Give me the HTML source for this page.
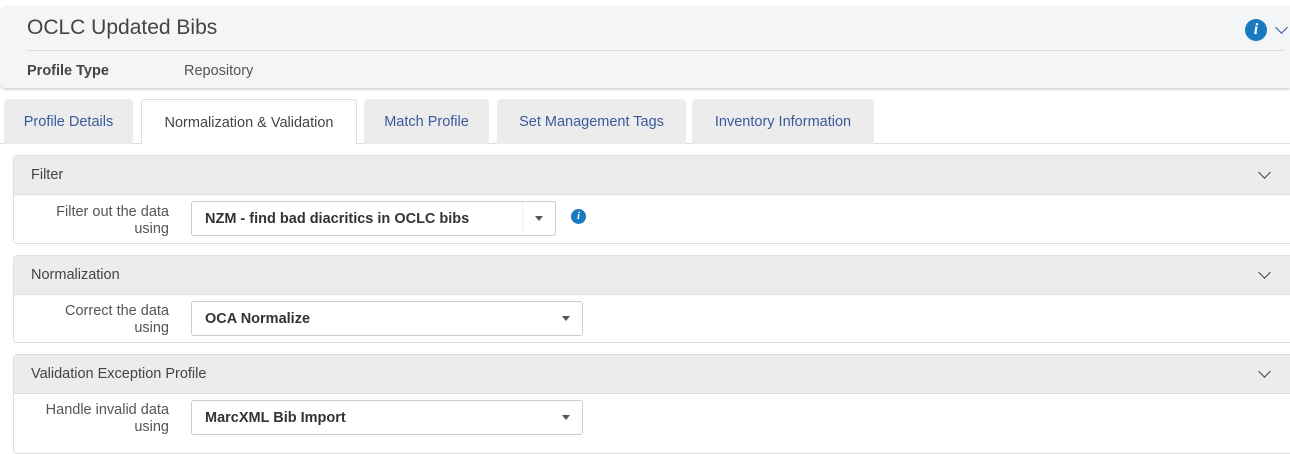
<!DOCTYPE html>
<html><head><style>
*{box-sizing:border-box;margin:0;padding:0}
body{width:1290px;height:440px;overflow:hidden;background:#fff;font-family:"Liberation Sans",sans-serif;color:#333;position:relative}
.abs{position:absolute}
.hdr{left:0;top:7px;width:1290px;height:81px;background:#f3f5f6;border-radius:6px 0 0 6px;box-shadow:0 1px 3px rgba(0,0,0,.25)}
.tab{position:absolute;top:99px;height:45px;background:#ececec;border-radius:4px 4px 0 0;color:#3a5a9c;font-size:14.5px;line-height:46px;text-align:center}
.sec{position:absolute;left:13px;width:1300px;border:1px solid #ddd;border-radius:4px}
.sh{position:relative;height:39px;background:#ececec;border-bottom:1px solid #ddd;padding-left:17px;line-height:39px;font-size:14.5px;color:#444}
.lbl{position:absolute;width:130px;left:25px;text-align:right;font-size:14.5px;color:#555;line-height:17px}
.sel{position:absolute;left:177px;height:35px;border:1px solid #ccc;border-radius:3px;font-weight:bold;font-size:14.5px;line-height:34px;padding-left:13px;color:#333}
.sel:after{content:"";position:absolute;right:12px;top:14px;border:4px solid transparent;border-top:5px solid #555}
.chev{position:absolute;right:43px;top:12px;width:9px;height:9px;border-right:1.6px solid #444;border-bottom:1.6px solid #444;transform:rotate(45deg)}
</style></head><body>
<div class="abs hdr">
 <div class="abs" style="left:27px;top:9px;font-size:21px;color:#444">OCLC Updated Bibs</div>
 <div class="abs" style="left:26px;top:43px;width:1258px;height:1px;background:#dcdcdc"></div>
 <div class="abs" style="left:27px;top:56px;font-size:14.5px;font-weight:bold;color:#444">Profile Type</div>
 <div class="abs" style="left:184px;top:56px;font-size:14.5px;color:#555">Repository</div>
 <div class="abs" style="left:1245px;top:12px;width:22px;height:22px;border-radius:50%;background:#1a7abf;color:#fff;font:italic bold 16px 'Liberation Serif',serif;text-align:center;line-height:22px">i</div>
 <div class="abs" style="left:1277px;top:16px;width:9px;height:9px;border-right:1.8px solid #2a5a9c;border-bottom:1.8px solid #2a5a9c;transform:rotate(45deg)"></div>
</div>
<div class="abs" style="left:0;top:143px;width:1290px;height:1px;background:#ddd"></div>
<div class="tab" style="left:4px;width:129px">Profile Details</div>
<div class="tab" style="left:141px;width:216px;background:#fff;border:1px solid #ddd;border-bottom:none;color:#444">Normalization &amp; Validation</div>
<div class="tab" style="left:364px;width:125px">Match Profile</div>
<div class="tab" style="left:497px;width:189px">Set Management Tags</div>
<div class="tab" style="left:692px;width:182px">Inventory Information</div>

<div class="sec" style="top:155px;height:89px">
 <div class="sh">Filter<div class="chev"></div></div>
 <div class="lbl" style="top:48px">Filter out the data using</div>
 <div class="sel" style="top:45px;width:365px">NZM - find bad diacritics in OCLC bibs<div class="abs" style="right:32px;top:0;width:1px;height:33px;background:#f2f2f2"></div></div>
 <div class="abs" style="left:557px;top:53px;width:15px;height:15px;border-radius:50%;background:#1a7abf;color:#fff;font:italic bold 11px 'Liberation Serif',serif;text-align:center;line-height:15px">i</div>
</div>
<div class="sec" style="top:255px;height:88px">
 <div class="sh">Normalization<div class="chev"></div></div>
 <div class="lbl" style="top:47px">Correct the data using</div>
 <div class="sel" style="top:45px;width:392px">OCA Normalize</div>
</div>
<div class="sec" style="top:354px;height:100px">
 <div class="sh">Validation Exception Profile<div class="chev"></div></div>
 <div class="lbl" style="top:47px">Handle invalid data using</div>
 <div class="sel" style="top:45px;width:392px">MarcXML Bib Import</div>
</div>
</body></html>
